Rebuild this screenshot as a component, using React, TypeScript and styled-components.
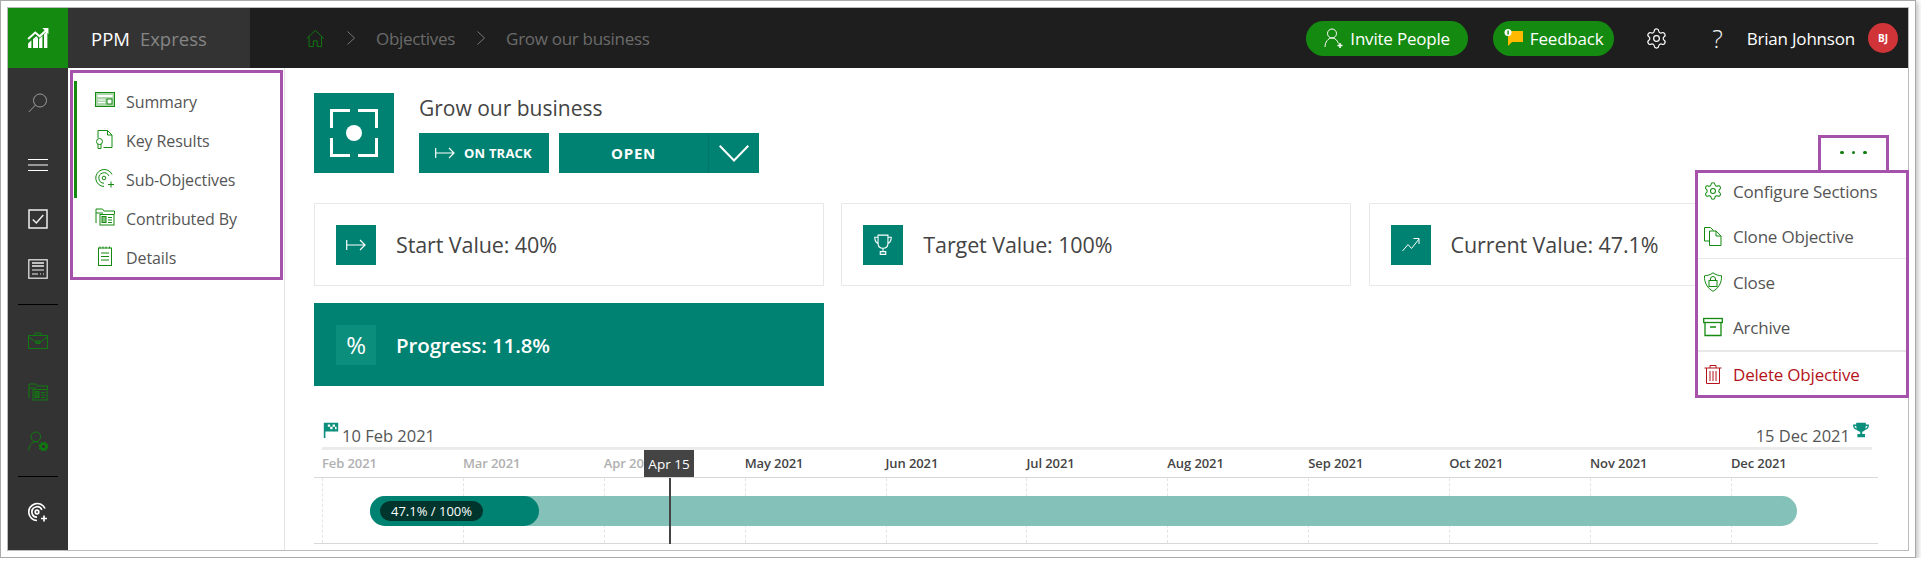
import React from 'react';
import styled, { createGlobalStyle } from 'styled-components';
import { Settings } from 'lucide-react';

const GREEN = '#148a10';
const DARKGREEN = '#107c10';
const TEAL = '#008272';
const PURPLE = '#a552ab';

const Global = createGlobalStyle`
  html, body { margin: 0; padding: 0; background: #fff; overflow: hidden; }
  body { font-family: "Open Sans", "Noto Sans", sans-serif; color: #444; }
  * { box-sizing: border-box; }
`;

const Frame = styled.div`
  width: 1916px;
  height: 558px;
  border: 1px solid #aaa;
  padding: 6px;
  background: #fff;
  box-shadow: 2px 2px 5px rgba(0, 0, 0, 0.25);
`;
const App2 = styled.div`
  height: 544px;
  width: 1902px;
  border: 1px solid #bbb;
  display: grid;
  grid-template-columns: 60px 1fr;
  grid-template-rows: 60px 1fr;
  background: #fff;
  overflow: visible;
`;
const Logo = styled.div`
  background: ${GREEN};
  display: flex;
  align-items: center;
  justify-content: center;
`;
const Header = styled.header`
  background: #1e1e1e;
  display: flex;
  align-items: center;
`;
const Brand = styled.div`
  width: 182px;
  height: 100%;
  background: #333;
  padding-left: 23px;
  display: flex;
  align-items: center;
  gap: 10px;
  font-size: 18.5px;
  color: #fff;
`;
const BrandMuted = styled.span`
  color: #858585;
`;
const Crumbs = styled.nav`
  display: flex;
  align-items: center;
  margin-left: 56px;
  font-size: 17px;
  letter-spacing: -0.3px;
  color: #6b6b6b;
`;
const CrumbSep = styled.span`
  display: flex;
  margin: 0 21px 0 22px;
`;
const HeaderRight = styled.div`
  margin-left: auto;
  display: flex;
  align-items: center;
  padding-right: 10px;
`;
const Pill = styled.button<{ $w: number; $ml: number }>`
  width: ${(p) => p.$w}px;
  margin-left: ${(p) => p.$ml}px;
  height: 35px;
  border: 0;
  border-radius: 18px;
  background: ${GREEN};
  color: #fff;
  font: 17px "Open Sans", sans-serif;
  letter-spacing: -0.2px;
  display: flex;
  align-items: center;
  justify-content: center;
  gap: 6px;
  padding: 0;
`;
const IconSlot = styled.span<{ $ml: number }>`
  margin-left: ${(p) => p.$ml}px;
  display: flex;
  color: #fff;
`;
const Question = styled.span`
  margin-left: 44px;
  font-size: 25px;
  font-weight: 300;
  color: #eee;
  line-height: 1;
`;
const UserName = styled.span`
  margin-left: 24px;
  font-size: 17px;
  letter-spacing: -0.2px;
  color: #fff;
`;
const Avatar = styled.span`
  margin-left: 13px;
  width: 30px;
  height: 30px;
  border-radius: 50%;
  background: #d13438;
  color: #fff;
  font-size: 10px;
  font-weight: 700;
  display: flex;
  align-items: center;
  justify-content: center;
`;

const Rail = styled.aside`
  background: #333;
  display: flex;
  flex-direction: column;
  align-items: center;
`;
const RailSlot = styled.div<{ $mt: number }>`
  margin-top: ${(p) => p.$mt}px;
  display: flex;
`;
const RailRule = styled.div<{ $mt: number }>`
  margin-top: ${(p) => p.$mt}px;
  width: 40px;
  height: 1px;
  background: #000;
`;

const Body = styled.div`
  display: grid;
  grid-template-columns: 217px 1fr;
  min-height: 0;
  height: 100%;
`;
const NavPanel = styled.div`
  border-right: 1px solid #e3e3e3;
  padding: 2px 1px 0 2px;
`;
const NavBox = styled.ul`
  list-style: none;
  margin: 0;
  height: 210px;
  border: 3px solid ${PURPLE};
  padding: 8px 0 0 1px;
`;
const NavItem = styled.li<{ $active?: boolean }>`
  height: 39px;
  border-left: 3px solid ${(p) => (p.$active ? GREEN : 'transparent')};
  padding: 2px 0 0 18px;
  display: flex;
  align-items: center;
  gap: 11px;
  font-size: 16px;
  letter-spacing: -0.1px;
  color: #555;
  svg {
    margin-bottom: 3px;
  }
`;

const Main = styled.main`
  padding: 25px 29px 0 29px;
  position: relative;
  min-width: 0;
`;
const Head = styled.div`
  display: flex;
  justify-content: space-between;
  height: 80px;
`;
const HeadLeft = styled.div`
  display: flex;
  gap: 25px;
`;
const HeroIcon = styled.div`
  width: 80px;
  height: 80px;
  background: ${TEAL};
  display: flex;
  align-items: center;
  justify-content: center;
`;
const HeadInfo = styled.div`
  display: flex;
  flex-direction: column;
  justify-content: space-between;
`;
const Title = styled.h1`
  margin: 0;
  font-size: 21px;
  font-weight: 400;
  color: #444;
  line-height: 30px;
`;
const Actions = styled.div`
  display: flex;
  gap: 10px;
`;
const TrackBtn = styled.div`
  width: 130px;
  height: 40px;
  background: ${TEAL};
  color: #fff;
  font-size: 13px;
  font-weight: 700;
  letter-spacing: 0.2px;
  display: flex;
  align-items: center;
  padding-left: 16px;
  gap: 9px;
`;
const OpenBtn = styled.div`
  width: 200px;
  height: 40px;
  background: ${TEAL};
  color: #fff;
  font-size: 15px;
  font-weight: 700;
  letter-spacing: 0.8px;
  display: grid;
  grid-template-columns: 149px 51px;
`;
const OpenLabel = styled.span`
  display: flex;
  align-items: center;
  justify-content: center;
`;
const OpenCaret = styled.span`
  border-left: 1px solid #00756a;
  display: flex;
  align-items: center;
  justify-content: center;
`;
const MoreWrap = styled.div`
  position: relative;
  margin: 42px -10px 0 0;
  width: 71px;
  height: 35px;
`;
const MoreBtn = styled.div`
  width: 71px;
  height: 38px;
  border: 3px solid ${PURPLE};
  display: flex;
  align-items: center;
  justify-content: center;
  gap: 8px;
  padding-bottom: 3px;
`;
const Dot = styled.i`
  width: 3.5px;
  height: 3.5px;
  border-radius: 50%;
  background: ${DARKGREEN};
`;
const Menu = styled.div`
  position: absolute;
  top: 35px;
  right: -20px;
  width: 214px;
  height: 228px;
  background: #fff;
  border: 3px solid ${PURPLE};
  z-index: 5;
`;
const MenuGroup = styled.div<{ $pt: number; $pb: number; $rule: number }>`
  padding: ${(p) => p.$pt}px 0 ${(p) => p.$pb}px;
  border-bottom: ${(p) => p.$rule}px solid #e8e8e8;
  display: flex;
  flex-direction: column;
  gap: 7px;
`;
const MenuItem = styled.div<{ $danger?: boolean }>`
  height: 38px;
  display: flex;
  align-items: center;
  gap: 10px;
  padding: 0 0 2px 5px;
  font-size: 17px;
  letter-spacing: -0.2px;
  color: ${(p) => (p.$danger ? '#b5121b' : '#555')};
`;

const Cards = styled.div`
  margin-top: 30px;
  display: grid;
  grid-template-columns: 510px 510px 510px;
  column-gap: 17.3px;
  row-gap: 17px;
`;
const Card = styled.div<{ $filled?: boolean }>`
  height: 83px;
  border: 1px solid ${(p) => (p.$filled ? TEAL : '#e8e8e8')};
  background: ${(p) => (p.$filled ? TEAL : '#fff')};
  color: ${(p) => (p.$filled ? '#fff' : '#444')};
  font-weight: ${(p) => (p.$filled ? 600 : 400)};
  padding-left: 21px;
  display: flex;
  align-items: center;
  gap: 20px;
  font-size: ${(p) => (p.$filled ? 20.5 : 21.5)}px;
  letter-spacing: -0.1px;
`;
const CardIcon = styled.div<{ $lighter?: boolean }>`
  width: 40px;
  height: 40px;
  background: ${(p) => (p.$lighter ? '#0b8e7c' : TEAL)};
  color: #fff;
  display: flex;
  align-items: center;
  justify-content: center;
  font-size: 24px;
  font-weight: 400;
`;

const Timeline = styled.section`
  margin-top: 36px;
`;
const Dates = styled.div`
  height: 25px;
  padding: 0 10px 0 9px;
  display: flex;
  justify-content: space-between;
  align-items: flex-start;
  font-size: 16.5px;
  color: #555;
`;
const DateTag = styled.span`
  display: flex;
  align-items: flex-start;
  gap: 3px;
  line-height: 27px;
`;
const Chart = styled.div`
  position: relative;
  width: 1564px;
`;
const Rule = styled.div`
  height: 3px;
  margin: 0 6px 0 8px;
  background: #ebebeb;
`;
const Months = styled.div`
  display: flex;
  height: 28px;
  padding-left: 8px;
  border-bottom: 1px solid #d8d8d8;
`;
const Month = styled.div<{ $past?: boolean }>`
  width: 140.9px;
  flex: none;
  font-size: 13px;
  font-weight: 600;
  letter-spacing: -0.1px;
  line-height: 27px;
  color: ${(p) => (p.$past ? '#b0b0b0' : '#444')};
`;
const Track = styled.div`
  position: relative;
  display: flex;
  height: 66px;
  padding-left: 8px;
  border-bottom: 1px solid #d8d8d8;
`;
const GridCol = styled.div`
  width: 140.9px;
  flex: none;
  border-left: 1px dashed #e4e4e4;
`;
const Bar = styled.div`
  position: absolute;
  left: 56px;
  top: 18px;
  width: 1427px;
  height: 30px;
  border-radius: 15px;
  background: #84c1b8;
`;
const BarFill = styled.div`
  height: 100%;
  border-radius: 15px;
  background: ${TEAL};
  padding: 5px 0 0 10px;
`;
const BarPill = styled.div`
  width: 103px;
  height: 20px;
  border-radius: 10px;
  background: #00352d;
  color: #fff;
  font-size: 13px;
  display: flex;
  align-items: center;
  justify-content: center;
`;
const MarkerTag = styled.div`
  position: absolute;
  left: 330px;
  top: 3px;
  width: 50px;
  height: 27px;
  background: #444;
  color: #fff;
  font-size: 13.5px;
  display: flex;
  align-items: center;
  justify-content: center;
  white-space: nowrap;
`;
const MarkerLine = styled.div`
  position: absolute;
  left: 355px;
  top: 31px;
  width: 2px;
  height: 66px;
  background: #444;
`;

const Ico = styled.svg.attrs({ viewBox: '0 0 20 20', fill: 'none' })<{ $s?: number; $c?: string; $sw?: number }>`
  width: ${(p) => p.$s ?? 20}px;
  height: ${(p) => p.$s ?? 20}px;
  stroke: ${(p) => p.$c ?? GREEN};
  stroke-width: ${(p) => p.$sw ?? 1};
  flex: none;
  display: block;
`;

type I = { s?: number; c?: string; sw?: number };
const mk = (children: React.ReactNode) =>
  ({ s, c, sw }: I) => (
    <Ico $s={s} $c={c} $sw={sw}>
      {children}
    </Ico>
  );

const LogoIcon = () => (
  <Ico $s={22} $c="#fff" $sw={0}>
    <path fill="#fff" d="M1 19v-4l3-3v7zM5.500 19v-8l3-2.500 1.500 1.500V19zM11 19v-8l3-3v11zM15.500 19V6.500l3-3V19z" />
    <path fill="none" stroke="#fff" strokeWidth="1.800" d="M1 11l6.500-6 4 3.500L18 2.500" />
    <path fill="#fff" d="M14 1h5.500v5.500z" />
  </Ico>
);
const IcSummary = mk(
  <>
    <rect x=".5" y="2.500" width="19" height="14" fill="#148a10" fillOpacity=".35" />
    <rect x="2.500" y="5" width="15" height="2" fill="#fff" stroke="none" />
    <rect x="12" y="9" width="5" height="5" fill="#fff" />
    <path d="M3 10h7M3 12.500h7" stroke="#fff" />
  </>,
);
const IcKey = mk(
  <>
    <path d="M3 9V1.500h9.500L17 6v12.500H8.500M12.500 1.500V6H17" />
    <circle cx="4.500" cy="12.500" r="3" />
    <path d="M3 15v4.500h3V15" />
  </>,
);
const IcTarget = mk(
  <>
    <path d="M17 6.500A8.500 8.500 0 1 0 9 18.500" />
    <path d="M13.800 7.800A5.200 5.200 0 1 0 9 15.200" />
    <circle cx="9" cy="10" r="1.800" />
    <path d="M16 13.500v6M13 16.500h6" />
  </>,
);
const IcFolder = mk(
  <>
    <path d="M1 16V2h6.500l1.500 2h10.500v3M1 6h7" />
    <rect x="5" y="7.500" width="14" height="10.500" />
    <rect x="7" y="9.500" width="4" height="6" fill="#148a10" fillOpacity=".5" />
    <path d="M13 10.500h4M13 13h4M13 15.500h4" />
  </>,
);
const IcDetails = mk(
  <>
    <rect x="3.500" y="2" width="13" height="17.500" />
    <path d="M5 .5v2M8 .5v2M11 .5v2M14.500 .5v2M6 7h8M6 10.500h8M6 14h8" />
  </>,
);
const IcSearch = mk(
  <>
    <circle cx="12" cy="7.500" r="6.500" />
    <path d="M7.500 12L.8 19" />
  </>,
);
const IcBurger = mk(<path d="M0 4.500h20M0 10h20M0 15.500h20" />);
const IcCheck = mk(
  <>
    <rect x="1" y="1" width="18" height="18" />
    <path d="M4.800 10.500L8.300 14l7-8" />
  </>,
);
const IcReport = mk(
  <>
    <rect x=".8" y=".8" width="18.400" height="18.400" />
    <path d="M4 4h12M4 7h12" strokeWidth="1.600" />
    <path d="M4 11h12M4 15h6M12 15h1M15 15h1" />
  </>,
);
const IcBrief = mk(
  <>
    <path d="M.5 5.500h19v13H.5zM7 5.500V3h6v2.500M.5 7L8 12h4l7.500-5M8 11h4v2.500H8z" />
  </>,
);
const IcUserGear = mk(
  <>
    <circle cx="7.800" cy="5.800" r="4.800" />
    <path d="M.6 19.500c.4-4.800 3-8.700 7.200-8.700 1 0 2 .2 2.800.7" />
    <circle cx="15.500" cy="15.500" r="2.800" strokeWidth="2" />
    <circle cx="15.500" cy="15.500" r="4.200" strokeWidth="1.400" strokeDasharray="2 1.300" />
  </>,
);
const IcHome = mk(<path d="M.8 10L9.800 1.500 18.800 10M3.300 8v10.500h4.500v-6h4v6h4.500V8" />);
const IcChevron = () => (
  <svg width="8" height="14" viewBox="0 0 8 14" fill="none" stroke="#777" strokeWidth="1">
    <path d="M.5.500L7.500 7 .5 13.500" />
  </svg>
);
const IcInvite = mk(
  <>
    <circle cx="8" cy="5.500" r="4.500" />
    <path d="M1 19c.2-5 3-9 7-9 3 0 5.400 2.200 6.400 5.500" />
    <path d="M16 15v5M13.500 17.500h5" strokeWidth="1.500" />
  </>,
);
const IcFeedback = () => (
  <Ico $s={20} $sw={0} $c="none">
    <path fill="#ffb900" d="M4 3h15v11H8l-4 4z" />
    <circle cx="4" cy="4.500" r="3.500" fill="#fff" />
    <rect x="3.400" y="2.500" width="1.400" height="4" fill="#148a10" />
  </Ico>
);
const IcHero = () => (
  <svg width="48" height="48" viewBox="0 0 48 48" fill="none" stroke="#fff" strokeWidth="3">
    <path d="M1.500 19V1.500H20M28 1.500h18.500V19M1.500 29v17.500H20M28 46.500h18.500V29" />
    <circle cx="24" cy="24" r="8" fill="#fff" stroke="none" />
  </svg>
);
const IcArrow = ({ w = 20 }: { w?: number }) => (
  <svg width={w} height={w * 0.6} viewBox="0 0 20 12" fill="none" stroke="#fff" strokeWidth="1.200">
    <path d="M.7 1v10M1 6h18M14 1l5 5-5 5" />
  </svg>
);
const IcCaret = () => (
  <svg width="30" height="17" viewBox="0 0 30 17" fill="none" stroke="#fff" strokeWidth="2">
    <path d="M.7.700L15 15.500 29.300.700" />
  </svg>
);
const IcTrophyOutline = mk(
  <>
    <path d="M5.500 1h9v7.500c0 3-2 4.500-4.500 4.500s-4.500-1.500-4.500-4.500zM5.500 3H2.500c0 3 1 5 3.500 6M14.500 3h3c0 3-1 5-3.500 6M10 13v3M7.500 16h5v2.500h-5z" />
  </>,
);
const IcTrend = mk(<path d="M1.500 16L7 9.500l3.500 4L18 4M12.500 3.500H18V9" />);
const IcFlag = () => (
  <Ico $s={16} $sw={0} $c="none">
    <path fill="#0b8e7c" d="M1 1h18v11H3v8H1z" />
    <path fill="#fff" d="M6 3h3v3H6zM12 3h3v3h-3zM9 6h3v3H9zM15 6h2v3h-2z" />
  </Ico>
);
const IcTrophy = () => (
  <Ico $s={16} $sw={0} $c="none">
    <path fill="#0b8e7c" d="M4 1h12v2h4c0 4-1.500 6-5 7-1 1.500-2.500 2-3.500 2.300V15h3.500v4H5.500v-4H9v-2.700C8 12 6 11.500 5 10 1.500 9 0 7 0 3h4zM2 5c.2 1.500 1 2.500 2.500 3.300L4 5zm16 0h-2l-.5 3.300C17 7.500 17.800 6.500 18 5z" />
  </Ico>
);
const IcClone = mk(
  <>
    <path d="M6.500 15H1.500V1.500h6l3 3" />
    <path d="M6.500 5h6.500l5 5v9.500h-11.500zM13 5v5h5" />
  </>,
);
const IcShield = mk(
  <>
    <path d="M10 .8c2.500 2 5.500 2.800 8.500 3 .4 7-3 12.500-8.500 15.500C4.500 16.300 1.100 10.800 1.500 3.800 4.500 3.600 7.500 2.800 10 .8z" />
    <rect x="6" y="8.500" width="8" height="6" />
    <path d="M7.500 8.500V7a2.500 2.500 0 0 1 5 0v1.500" />
  </>,
);
const IcArchive = mk(
  <>
    <rect x=".7" y="1.500" width="18.600" height="4" strokeWidth="1.300" />
    <path d="M2 5.500v13h16v-13M7 10h6" strokeWidth="1.300" />
  </>,
);
const IcTrash = mk(
  <>
    <path d="M1.500 4h17M7 4V1.500h6V4M3.500 4v15.500h13V4M7 7v10M10 7v10M13 7v10" />
  </>,
);

const MONTHS = ['Feb 2021', 'Mar 2021', 'Apr 2021', 'May 2021', 'Jun 2021', 'Jul 2021', 'Aug 2021', 'Sep 2021', 'Oct 2021', 'Nov 2021', 'Dec 2021'];

export default function App() {
  return (
    <>
      <Global />
      <Frame>
        <App2>
          <Logo>
            <LogoIcon />
          </Logo>
          <Header>
            <Brand>
              <span>PPM</span>
              <BrandMuted>Express</BrandMuted>
            </Brand>
            <Crumbs>
              <IcHome s={19} c={DARKGREEN} />
              <CrumbSep>
                <IcChevron />
              </CrumbSep>
              <span>Objectives</span>
              <CrumbSep>
                <IcChevron />
              </CrumbSep>
              <span>Grow our business</span>
            </Crumbs>
            <HeaderRight>
              <Pill $w={162} $ml={0}>
                <IcInvite s={20} c="#fff" />
                Invite People
              </Pill>
              <Pill $w={121} $ml={25}>
                <IcFeedback />
                Feedback
              </Pill>
              <IconSlot $ml={31}>
                <Settings size={23} strokeWidth={1.25} />
              </IconSlot>
              <Question>?</Question>
              <UserName>Brian Johnson</UserName>
              <Avatar>BJ</Avatar>
            </HeaderRight>
          </Header>
          <Rail>
            <RailSlot $mt={25}>
              <IcSearch c="#9a9a9a" />
            </RailSlot>
            <RailSlot $mt={42}>
              <IcBurger c="#fff" />
            </RailSlot>
            <RailSlot $mt={34}>
              <IcCheck c="#eee" sw={1.5} />
            </RailSlot>
            <RailSlot $mt={30}>
              <IcReport c="#eee" sw={1.2} />
            </RailSlot>
            <RailRule $mt={25} />
            <RailSlot $mt={25}>
              <IcBrief c={DARKGREEN} />
            </RailSlot>
            <RailSlot $mt={32}>
              <IcFolder c={DARKGREEN} />
            </RailSlot>
            <RailSlot $mt={29}>
              <IcUserGear c={DARKGREEN} />
            </RailSlot>
            <RailRule $mt={25} />
            <RailSlot $mt={25}>
              <IcTarget c="#fff" sw={1.7} />
            </RailSlot>
          </Rail>
          <Body>
            <NavPanel>
              <NavBox>
                <NavItem $active>
                  <IcSummary />
                  Summary
                </NavItem>
                <NavItem $active>
                  <IcKey />
                  Key Results
                </NavItem>
                <NavItem $active>
                  <IcTarget />
                  Sub-Objectives
                </NavItem>
                <NavItem>
                  <IcFolder />
                  Contributed By
                </NavItem>
                <NavItem>
                  <IcDetails />
                  Details
                </NavItem>
              </NavBox>
            </NavPanel>
            <Main>
              <Head>
                <HeadLeft>
                  <HeroIcon>
                    <IcHero />
                  </HeroIcon>
                  <HeadInfo>
                    <Title>Grow our business</Title>
                    <Actions>
                      <TrackBtn>
                        <IcArrow />
                        ON TRACK
                      </TrackBtn>
                      <OpenBtn>
                        <OpenLabel>OPEN</OpenLabel>
                        <OpenCaret>
                          <IcCaret />
                        </OpenCaret>
                      </OpenBtn>
                    </Actions>
                  </HeadInfo>
                </HeadLeft>
                <MoreWrap>
                  <MoreBtn>
                    <Dot />
                    <Dot />
                    <Dot />
                  </MoreBtn>
                  <Menu>
                    <MenuGroup $pt={0} $pb={2} $rule={1}>
                      <MenuItem>
                        <Settings size={20} strokeWidth={1.25} color={GREEN} />
                        Configure Sections
                      </MenuItem>
                      <MenuItem>
                        <IcClone />
                        Clone Objective
                      </MenuItem>
                    </MenuGroup>
                    <MenuGroup $pt={5} $pb={3} $rule={2}>
                      <MenuItem>
                        <IcShield />
                        Close
                      </MenuItem>
                      <MenuItem>
                        <IcArchive />
                        Archive
                      </MenuItem>
                    </MenuGroup>
                    <MenuGroup $pt={4} $pb={0} $rule={0}>
                      <MenuItem $danger>
                        <IcTrash c="#b5121b" />
                        Delete Objective
                      </MenuItem>
                    </MenuGroup>
                  </Menu>
                </MoreWrap>
              </Head>
              <Cards>
                <Card>
                  <CardIcon>
                    <IcArrow w={20} />
                  </CardIcon>
                  Start Value: 40%
                </Card>
                <Card>
                  <CardIcon>
                    <IcTrophyOutline s={22} c="#fff" />
                  </CardIcon>
                  Target Value: 100%
                </Card>
                <Card>
                  <CardIcon>
                    <IcTrend s={20} c="#fff" />
                  </CardIcon>
                  Current Value: 47.1%
                </Card>
                <Card $filled>
                  <CardIcon $lighter>%</CardIcon>
                  Progress: 11.8%
                </Card>
              </Cards>
              <Timeline>
                <Dates>
                  <DateTag>
                    <IcFlag />
                    10 Feb 2021
                  </DateTag>
                  <DateTag>
                    15 Dec 2021
                    <IcTrophy />
                  </DateTag>
                </Dates>
                <Chart>
                  <Rule />
                  <Months>
                    {MONTHS.map((m, i) => (
                      <Month key={m} $past={i < 3}>
                        {m}
                      </Month>
                    ))}
                  </Months>
                  <Track>
                    {MONTHS.map((m) => (
                      <GridCol key={m} />
                    ))}
                    <Bar>
                      <BarFill style={{ width: `${(47.1 / 100) * 359}px` }}>
                        <BarPill>47.1% / 100%</BarPill>
                      </BarFill>
                    </Bar>
                  </Track>
                  <MarkerTag>Apr 15</MarkerTag>
                  <MarkerLine />
                </Chart>
              </Timeline>
            </Main>
          </Body>
        </App2>
      </Frame>
    </>
  );
}
